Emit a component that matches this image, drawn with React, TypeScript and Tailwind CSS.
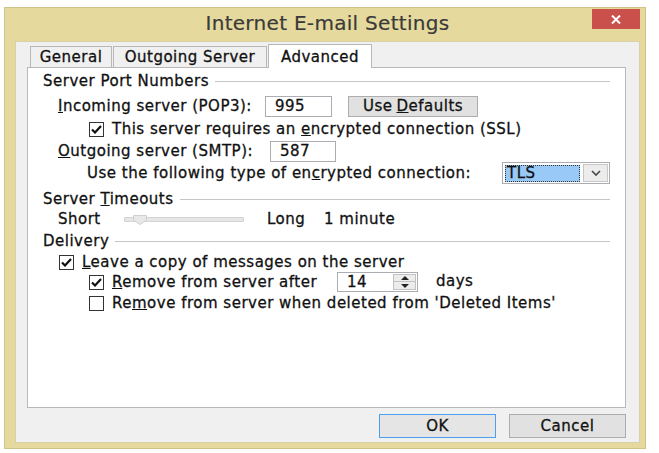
import React from 'react'

const font = { fontFamily: '"DejaVu Sans", "Open Sans", sans-serif' }

function Check({ checked }: { checked: boolean }) {
  return (
    <span className="flex h-[15px] w-[15px] shrink-0 items-center justify-center border border-[#333] bg-white">
      {checked && (
        <svg width="11" height="9" viewBox="0 0 11 9">
          <path d="M1 4.5 L4 7.5 L10 1" fill="none" stroke="#111" strokeWidth="2.2" />
        </svg>
      )}
    </span>
  )
}

function Heading({ label }: { label: React.ReactNode }) {
  return (
    <div className="flex h-[20px] items-center pl-[15px] pr-[15px]">
      <span className="whitespace-nowrap">{label}</span>
      <span className="ml-[6px] h-px flex-1 bg-[#c5c5c5]" />
    </div>
  )
}

function App() {
  return (
    <div
      className="h-[453px] w-[659px] overflow-hidden bg-white pt-[7px] pl-[4px] text-[15px] tracking-[0.5px] text-[#111] [-webkit-text-stroke:0.3px_#111]"
      style={font}
    >
      <div className="flex h-[442px] w-[642px] flex-col border border-[#cfc38a] bg-[#e5d99d] pr-[5px] pb-[5px] pl-[10px]">
        <div className="relative flex h-[33px] items-center justify-center pb-[4px]">
          <span className="text-[20px] tracking-[0.3px] text-[#3a3a3a] [-webkit-text-stroke:0.2px_#3a3a3a]">Internet E-mail Settings</span>
          <span className="absolute top-[1px] right-[0px] flex h-[20px] w-[48px] items-center justify-center bg-[#c9504b]">
            <svg width="10" height="9" viewBox="0 0 10 9">
              <path d="M1 0.5 L9 8.5 M9 0.5 L1 8.5" stroke="#fff" strokeWidth="2" />
            </svg>
          </span>
        </div>
        <div className="flex flex-1 flex-col border border-[#d8d0a8] bg-[#f0f0f0] pr-[13px] pl-[11px]">
          {/* tabs */}
          <div className="flex h-[25px] items-end pl-[3px]">
            <div className="flex h-[21px] w-[82px] items-center justify-center border border-b-0 border-[#b8b8b8] bg-[#f0f0f0]">General</div>
            <div className="ml-[1px] flex h-[21px] w-[154px] items-center justify-center border border-b-0 border-[#b8b8b8] bg-[#f0f0f0]">Outgoing Server</div>
            <div className="relative z-10 -mb-px ml-[1px] flex h-[24px] w-[104px] items-start justify-center border border-b-0 border-[#b8b8b8] bg-white pt-[1px]">Advanced</div>
          </div>
          {/* panel */}
          <div className="flex h-[341px] flex-col border border-[#b8b8b8] bg-white">
            <div className="mt-[3px]">
              <Heading label="Server Port Numbers" />
            </div>
            <div className="mt-[5px] flex h-[20px] items-center pl-[30px]">
              <span className="w-[207px]"><span className="underline">I</span>ncoming server (POP3):</span>
              <span className="flex h-[21px] w-[67px] items-center border border-[#abadb3] bg-white pl-[9px]">995</span>
              <span className="ml-[16px] flex h-[21px] w-[130px] items-center justify-center border border-[#adadad] bg-[#e1e1e1]">
                Use <span className="ml-[4px] underline">D</span>efaults
              </span>
            </div>
            <div className="mt-[3px] flex h-[20px] items-center pl-[61px]">
              <Check checked />
              <span className="ml-[8px]">This server requires an <span className="underline">e</span>ncrypted connection (SSL)</span>
            </div>
            <div className="mt-[2px] flex h-[20px] items-center pl-[30px]">
              <span className="w-[212px]"><span className="underline">O</span>utgoing server (SMTP):</span>
              <span className="flex h-[21px] w-[66px] items-center border border-[#abadb3] bg-white pl-[9px]">587</span>
            </div>
            <div className="mt-[2px] flex h-[20px] items-center pl-[59px]">
              <span className="w-[415px]">Use the following type of en<span className="underline">c</span>rypted connection:</span>
              <span className="flex h-[22px] w-[108px] items-center border border-[#abadb3] bg-white">
                <span className="ml-[2px] flex h-[17px] w-[75px] items-center border border-dotted border-[#333] bg-[#99c9f7] pl-[1px] leading-none">TLS</span>
                <span className="ml-[3px] mr-[1px] flex h-[18px] flex-1 items-center justify-center border border-[#c7c7c7] bg-[#ececec]">
                  <svg width="10" height="6" viewBox="0 0 10 6">
                    <path d="M1 1 L5 5 L9 1" fill="none" stroke="#444" strokeWidth="1.6" />
                  </svg>
                </span>
              </span>
            </div>
            <div className="mt-[6px]">
              <Heading label={<>Server <span className="underline">T</span>imeouts</>} />
            </div>
            <div className="flex h-[20px] items-center pl-[30px]">
              <span className="w-[66px]">Short</span>
              <span className="relative h-[5px] w-[120px] rounded-[1px] border border-[#d4d4d4] bg-[#e6e6e6]">
                <svg className="absolute -top-[3px] left-[8px]" width="14" height="10" viewBox="0 0 14 10">
                  <path d="M0.5 0.5 H13.5 V5 L7 9.5 L0.5 5 Z" fill="#e8e8e8" stroke="#cfcfcf" />
                </svg>
              </span>
              <span className="ml-[23px] w-[57px]">Long</span>
              <span>1 minute</span>
            </div>
            <div className="mt-[2px]">
              <Heading label="Delivery" />
            </div>
            <div className="mt-[1px] flex h-[20px] items-center pl-[31px]">
              <Check checked />
              <span className="ml-[8px]"><span className="underline">L</span>eave a copy of messages on the server</span>
            </div>
            <div className="flex h-[20px] items-center pl-[61px]">
              <Check checked />
              <span className="ml-[8px] w-[225px]"><span className="underline">R</span>emove from server after</span>
              <span className="flex h-[20px] w-[81px] items-center border border-[#abadb3] bg-white">
                <span className="flex-1 pl-[9px]">14</span>
                <span className="mr-[1px] flex h-[16px] w-[23px] flex-col items-center justify-center border border-[#c2c2c2] bg-[#ececec]">
                  <span className="flex h-[7px] w-full items-center justify-center border-b border-[#c2c2c2]">
                    <svg width="8" height="4" viewBox="0 0 8 4"><path d="M0 4 L4 0 L8 4 Z" fill="#222" /></svg>
                  </span>
                  <span className="flex h-[7px] w-full items-center justify-center">
                    <svg width="8" height="4" viewBox="0 0 8 4"><path d="M0 0 L4 4 L8 0 Z" fill="#222" /></svg>
                  </span>
                </span>
              </span>
              <span className="ml-[18px] -mt-[2px]">days</span>
            </div>
            <div className="mt-[1px] flex h-[20px] items-center pl-[61px]">
              <Check checked={false} />
              <span className="ml-[8px]">Re<span className="underline">m</span>ove from server when deleted from 'Deleted Items'</span>
            </div>
          </div>
          {/* buttons */}
          <div className="mt-[6px] flex justify-end gap-[13px]">
            <span className="flex h-[24px] w-[117px] items-center justify-center border border-[#4aa0ef] bg-[#e5e5e5]">OK</span>
            <span className="flex h-[24px] w-[117px] items-center justify-center border border-[#adadad] bg-[#e1e1e1]">Cancel</span>
          </div>
        </div>
      </div>
    </div>
  )
}

export default App
